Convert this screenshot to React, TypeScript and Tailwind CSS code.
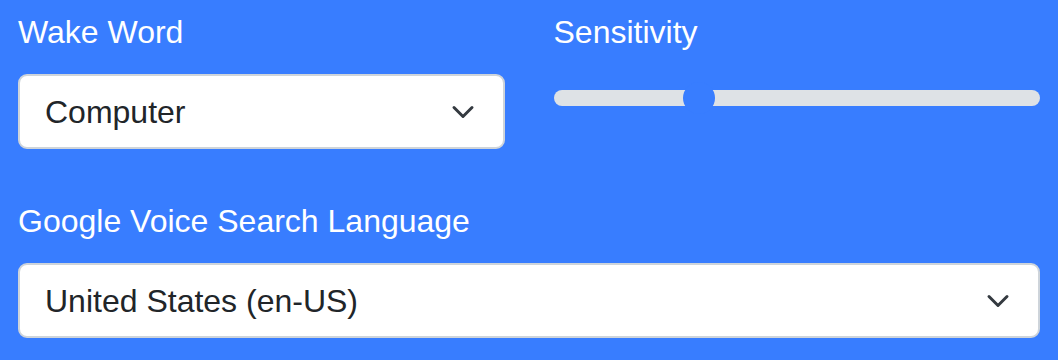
import React from "react";

function Chevron() {
  return (
    <svg
      viewBox="0 0 16 16"
      className="w-6 h-6 shrink-0"
      fill="none"
      stroke="#343a40"
      strokeWidth={2}
      strokeLinecap="round"
      strokeLinejoin="round"
    >
      <path d="m2 5 6 6 6-6" />
    </svg>
  );
}

function SelectBox({ value }: { value: string }) {
  return (
    <div className="flex items-center justify-between h-[75px] bg-white border-2 border-[#ced4da] rounded-[9px] pl-[25px] pr-[28px] text-[#212529] text-[32px] leading-[48px]">
      <span>{value}</span>
      <Chevron />
    </div>
  );
}

function Label({ children }: { children: React.ReactNode }) {
  return <div className="text-white text-[32px] leading-[48px] mb-[18px]">{children}</div>;
}

// thumb is the same blue as the page, so it reads as a notch in the track
function Slider({ value }: { value: number }) {
  return (
    <div className="relative h-4 mt-[34px] rounded-full bg-[#dee2e6]">
      <span
        className="absolute top-1/2 w-8 h-8 -translate-y-1/2 rounded-full bg-[#387dff]"
        style={{ left: `calc(${value} * (100% - 32px))` }}
      />
    </div>
  );
}

export default function App() {
  return (
    <div
      className="w-[1058px] h-[360px] bg-[#387dff] px-[18px] pt-2"
      style={{ fontFamily: '"Liberation Sans", Arial, sans-serif' }}
    >
      <div className="grid grid-cols-2 gap-x-[49px]">
        <div>
          <Label>Wake Word</Label>
          <SelectBox value="Computer" />
        </div>
        <div>
          <Label>Sensitivity</Label>
          <Slider value={0.286} />
        </div>
      </div>
      <div className="mt-[48px]">
        <Label>Google Voice Search Language</Label>
        <SelectBox value="United States (en-US)" />
      </div>
    </div>
  );
}
